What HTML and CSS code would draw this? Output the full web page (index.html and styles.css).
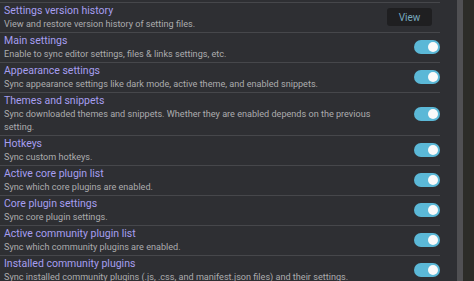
FILE: index.html
```html
<!DOCTYPE html>
<html lang="en">
<head>
<meta charset="UTF-8">
<title>Sync settings</title>
<link rel="stylesheet" href="styles.css">
</head>
<body>

<div class="window">
  <div class="panel">
    <div class="setting-list">
      <div class="setting-item">
        <div class="setting-info">
          <div class="setting-name">Settings version history</div>
          <div class="setting-desc">View and restore version history of setting files.</div>
        </div>
        <button class="view-button">View</button>
      </div>
      <div class="setting-item">
        <div class="setting-info">
          <div class="setting-name">Main settings</div>
          <div class="setting-desc">Enable to sync editor settings, files &amp; links settings, etc.</div>
        </div>
        <div class="toggle on"><div class="knob"></div></div>
      </div>
      <div class="setting-item">
        <div class="setting-info">
          <div class="setting-name">Appearance settings</div>
          <div class="setting-desc">Sync appearance settings like dark mode, active theme, and enabled snippets.</div>
        </div>
        <div class="toggle on"><div class="knob"></div></div>
      </div>
      <div class="setting-item">
        <div class="setting-info">
          <div class="setting-name">Themes and snippets</div>
          <div class="setting-desc">Sync downloaded themes and snippets. Whether they are enabled depends on the previous setting.</div>
        </div>
        <div class="toggle on"><div class="knob"></div></div>
      </div>
      <div class="setting-item">
        <div class="setting-info">
          <div class="setting-name">Hotkeys</div>
          <div class="setting-desc">Sync custom hotkeys.</div>
        </div>
        <div class="toggle on"><div class="knob"></div></div>
      </div>
      <div class="setting-item">
        <div class="setting-info">
          <div class="setting-name">Active core plugin list</div>
          <div class="setting-desc">Sync which core plugins are enabled.</div>
        </div>
        <div class="toggle on"><div class="knob"></div></div>
      </div>
      <div class="setting-item">
        <div class="setting-info">
          <div class="setting-name">Core plugin settings</div>
          <div class="setting-desc">Sync core plugin settings.</div>
        </div>
        <div class="toggle on"><div class="knob"></div></div>
      </div>
      <div class="setting-item">
        <div class="setting-info">
          <div class="setting-name">Active community plugin list</div>
          <div class="setting-desc">Sync which community plugins are enabled.</div>
        </div>
        <div class="toggle on"><div class="knob"></div></div>
      </div>
      <div class="setting-item">
        <div class="setting-info">
          <div class="setting-name">Installed community plugins</div>
          <div class="setting-desc">Sync installed community plugins (.js, .css, and manifest.json files) and their settings.</div>
        </div>
        <div class="toggle on"><div class="knob"></div></div>
      </div>
    </div>
  </div>
  <div class="scrollbar"></div>
  <div class="backdrop"></div>
</div>

</body>
</html>
```
FILE: styles.css
```css
body, html {
  margin: 0;
  padding: 0;
  height: 100%;
  overflow: hidden;
  font-family: Roboto, "Noto Sans", sans-serif;
}
.window {
  display: flex;
  height: 100%;
}
.panel {
  width: 457px;
  background-color: #2e2f33;
  padding-top: 2px;
  box-sizing: border-box;
}
.setting-list {
  width: 440px;
}
.setting-item {
  display: flex;
  align-items: center;
  border-top: 1px solid #46474b;
  padding: 0 0 1px 0;
}
.setting-info {
  flex: 1;
  padding-left: 4px;
  padding-right: 30px; /* keeps "setting." on the second line */
}
.setting-name {
  font-size: 10.5px;
  line-height: 15px;
  color: #a69ef0;
}
.setting-desc {
  font-size: 9.1px;
  line-height: 13px;
  color: #acacae;
}
.view-button {
  width: 45px;
  height: 18px;
  margin-right: 8px;
  background-color: #1f1f21;
  color: #78aabf;
  border: none;
  border-radius: 3px;
  font-family: inherit;
  font-size: 10px;
  padding: 0;
}
.toggle {
  width: 26px;
  height: 14px;
  border-radius: 7px;
  background-color: #5bb8d7;
  display: flex;
  align-items: center;
  justify-content: flex-end;
  padding: 0 2px;
  box-sizing: border-box;
}
.knob {
  width: 10px;
  height: 10px;
  border-radius: 50%;
  background-color: #fafafa;
}
.scrollbar {
  width: 6px;
  background-color: #505053;
}
.backdrop {
  flex: 1;
  background-color: #2c2c28;
}
```
